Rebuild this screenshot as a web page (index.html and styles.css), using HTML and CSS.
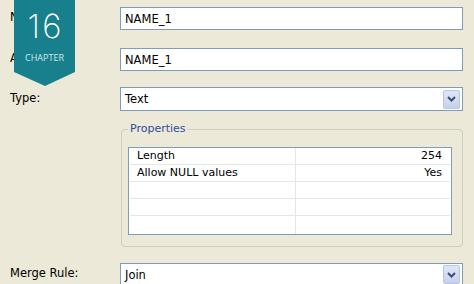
FILE: index.html
```html
<!DOCTYPE html>
<html>
<head>
<meta charset="utf-8">
<link rel="stylesheet" href="styles.css">
</head>
<body>
<div class="badge">
  <svg class="badge-shape" width="61" height="86" viewBox="0 0 61 86"><polygon points="0,0 61,0 61,72 31,86 0,72" fill="#17808c"/></svg>
  <span class="badge-num">16</span>
  <span class="badge-label">CHAPTER</span>
</div>
<div class="form">
  <div class="row row-name">
    <label class="lbl">Name:</label>
    <div class="field">NAME_1</div>
  </div>
  <div class="row row-alias">
    <label class="lbl">Alias:</label>
    <div class="field">NAME_1</div>
  </div>
  <div class="row row-type">
    <label class="lbl">Type:</label>
    <div class="field combo">
      <span class="combo-text">Text</span>
      <span class="combo-btn"><svg width="9" height="6" viewBox="0 0 9 6"><path d="M1 1 L4.5 4.5 L8 1" fill="none" stroke="#3b4c7a" stroke-width="2"/></svg></span>
    </div>
  </div>
  <fieldset class="group">
    <legend class="legend">Properties</legend>
    <div class="grid">
      <div class="cell">Length</div><div class="cell val">254</div>
      <div class="cell">Allow NULL values</div><div class="cell val">Yes</div>
      <div class="cell"></div><div class="cell val"></div>
      <div class="cell"></div><div class="cell val"></div>
      <div class="cell last"></div><div class="cell val last"></div>
    </div>
  </fieldset>
  <div class="row row-merge">
    <label class="lbl">Merge Rule:</label>
    <div class="field combo">
      <span class="combo-text">Join</span>
      <span class="combo-btn"><svg width="9" height="6" viewBox="0 0 9 6"><path d="M1 1 L4.5 4.5 L8 1" fill="none" stroke="#3b4c7a" stroke-width="2"/></svg></span>
    </div>
  </div>
</div>
</body>
</html>
```
FILE: styles.css
```css
html, body {
  margin: 0;
  padding: 0;
  background: #ece9d8;
  width: 474px;
  height: 284px;
  overflow: hidden;
  font-family: "DejaVu Sans", Verdana, sans-serif;
  font-size: 11px;
  color: #000;
}

.badge {
  position: absolute;
  left: 14px;
  top: 0;
  width: 61px;
  height: 86px;
  z-index: 2;
}
.badge-shape {
  position: absolute;
  left: 0;
  top: 0;
}
.badge-num {
  position: absolute;
  left: 0;
  right: 0;
  top: 6px;
  text-align: center;
  font-family: Inter, "Open Sans", sans-serif;
  font-weight: 200;
  font-size: 33px;
  letter-spacing: 2px;
  text-indent: 2px;
  line-height: 40px;
  color: #ffffff;
}
.badge-label {
  position: absolute;
  left: 0;
  right: 0;
  top: 52px;
  text-align: center;
  font-family: "Open Sans", sans-serif;
  font-size: 9px;
  line-height: 12px;
  color: #cde8ec;
}

.form {
  display: flex;
  flex-direction: column;
  padding: 7px 0 0 10px;
}
.row {
  display: flex;
  align-items: center;
  height: 23px;
}
.row-alias { margin-top: 18px; }
.row-type { margin-top: 16px; height: 24px; }
.row-merge { margin-top: 16px; }

.lbl {
  width: 110px;
  flex: none;
  margin-top: -3px;
  font-size: 11.5px;
}
.field {
  box-sizing: border-box;
  width: 343px;
  height: 100%;
  border: 1px solid #7f9db9;
  background: #fff;
  padding: 0 4px;
  display: flex;
  align-items: center;
  font-size: 11.5px;
}
.combo {
  justify-content: space-between;
  padding-right: 1px;
}
.combo-btn {
  box-sizing: border-box;
  width: 17px;
  height: 19px;
  margin-right: 1px;
  background: linear-gradient(#dfe6f6, #c6d1ed);
  border: 1px solid #b9c5e3;
  border-radius: 2px;
  display: flex;
  align-items: center;
  justify-content: center;
}

.group {
  margin: 11px 0 0 111px;
  width: 342px;
  box-sizing: border-box;
  border: 1px solid #d0d0bf;
  border-radius: 4px;
  padding: 11px 10px 11px 6px;
  min-width: 0;
}
.legend {
  padding: 0 2px;
  color: #2f4d9c;
  font-size: 11px;
  line-height: 14px;
}
.grid {
  display: grid;
  grid-template-columns: 165px 1fr;
  border: 1px solid #7f9db9;
  background: #fff;
  padding: 0 1px;
}
.cell {
  box-sizing: border-box;
  height: 17px;
  line-height: 16px;
  border-bottom: 1px solid #e6e6e6;
  padding-left: 7px;
  white-space: nowrap;
}
.cell.val {
  border-left: 1px solid #e6e6e6;
  text-align: right;
  padding-right: 8px;
}
.cell.last {
  border-bottom: none;
  height: 18px;
}
```
